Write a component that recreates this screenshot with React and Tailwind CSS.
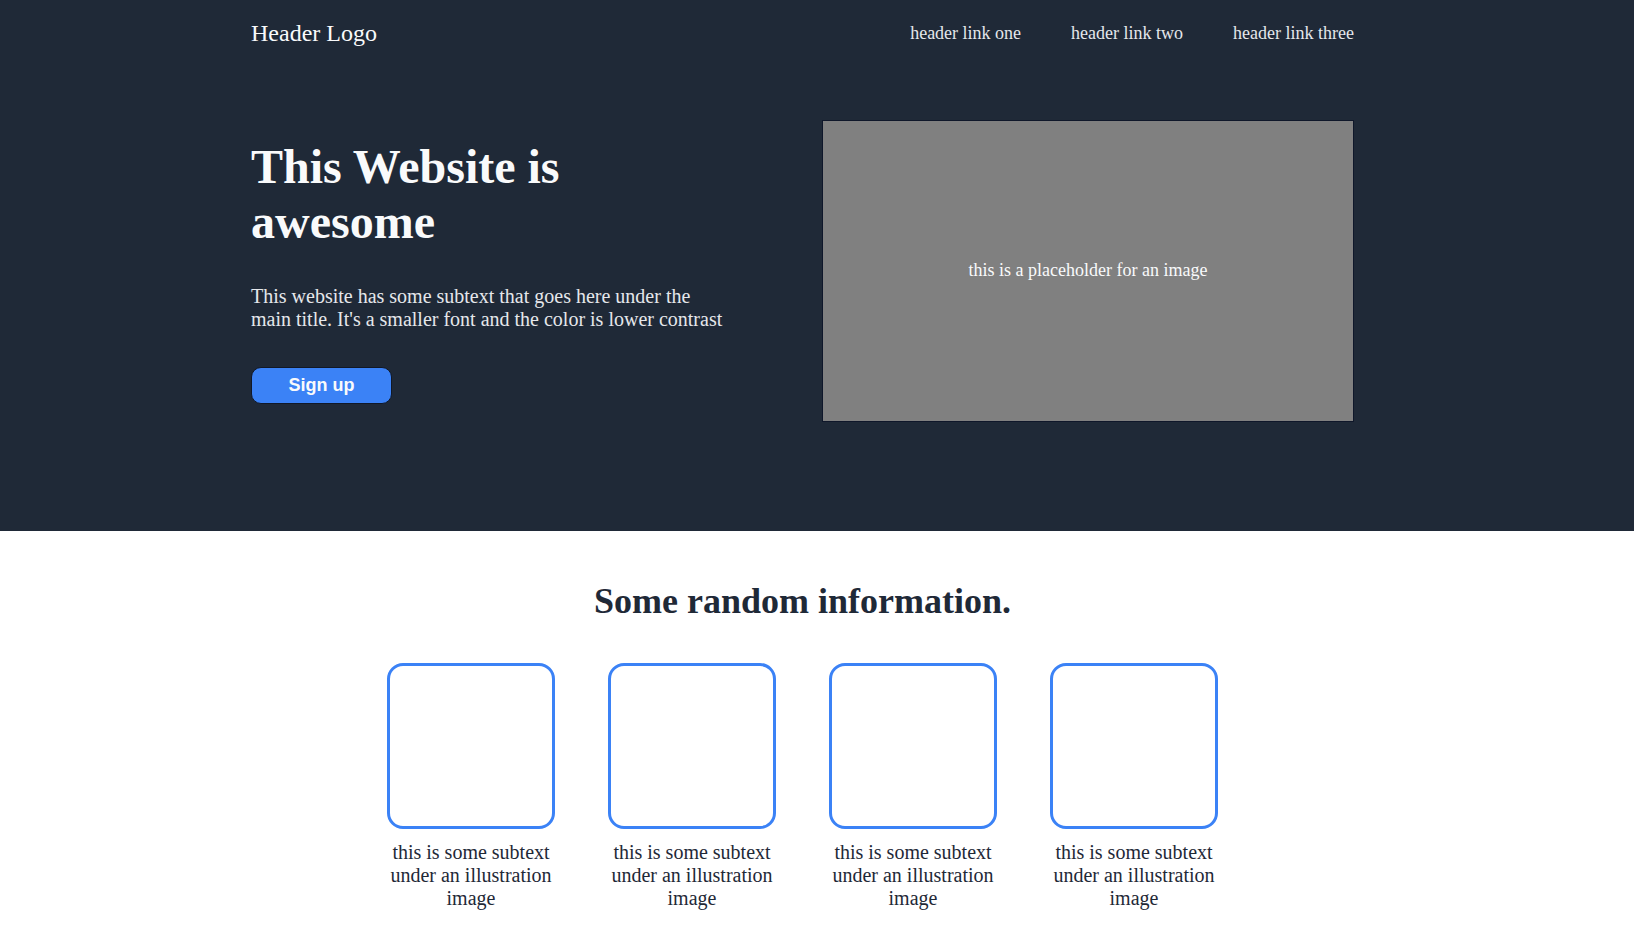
const links = ["header link one", "header link two", "header link three"];

const cards = [1, 2, 3, 4];

export default function App() {
  return (
    <div className="min-h-screen bg-white font-['Liberation_Serif','Times_New_Roman',serif]">
      <div className="bg-[#1f2937] pb-[109px]">
        <div className="ml-[251px] w-[1103px]">
          <header className="flex items-center justify-between py-5">
            <div className="text-[24px] leading-[1.15] text-[#f9fafb]">Header Logo</div>
            <nav className="flex gap-[50px] text-[18px] leading-[1.15] text-[#e5e7eb]">
              {links.map((l) => (
                <a key={l} href="#">
                  {l}
                </a>
              ))}
            </nav>
          </header>

          <div className="mt-[52px] flex items-center justify-between">
            <div className="w-[480px] pt-[2px]">
              <h1 className="text-[48px] font-bold leading-[1.15] text-[#f9fafb]">
                This Website is awesome
              </h1>
              <p className="mt-9 text-[20px] leading-[1.15] text-[#e5e7eb]">
                This website has some subtext that goes here under the main title. It's a smaller font and the color is lower contrast
              </p>
              <button className="mt-9 h-[37px] w-[141px] rounded-[10px] border border-[#111827] bg-[#3b82f6] font-['Liberation_Sans',Arial,sans-serif] text-[18px] font-bold text-[#f9fafb]">
                Sign up
              </button>
            </div>
            <div className="flex h-[302px] w-[532px] items-center justify-center border border-[#0f172a] bg-[#808080] text-[18px] text-[#f9fafb]">
              this is a placeholder for an image
            </div>
          </div>
        </div>
      </div>

      <section className="ml-[251px] w-[1103px] pt-[50px] pb-16">
        <h2 className="text-center text-[36px] font-bold leading-[1.15] text-[#1f2937]">
          Some random information.
        </h2>
        <div className="mt-[41px] flex justify-center gap-[53px]">
          {cards.map((c) => (
            <div key={c} className="w-[168px]">
              <div className="h-[166px] w-[168px] rounded-[16px] border-[3px] border-[#3b82f6]" />
              <p className="mt-[12px] text-center text-[20px] leading-[1.15] text-[#1f2937]">
                this is some subtext under an illustration image
              </p>
            </div>
          ))}
        </div>
      </section>
    </div>
  );
}
